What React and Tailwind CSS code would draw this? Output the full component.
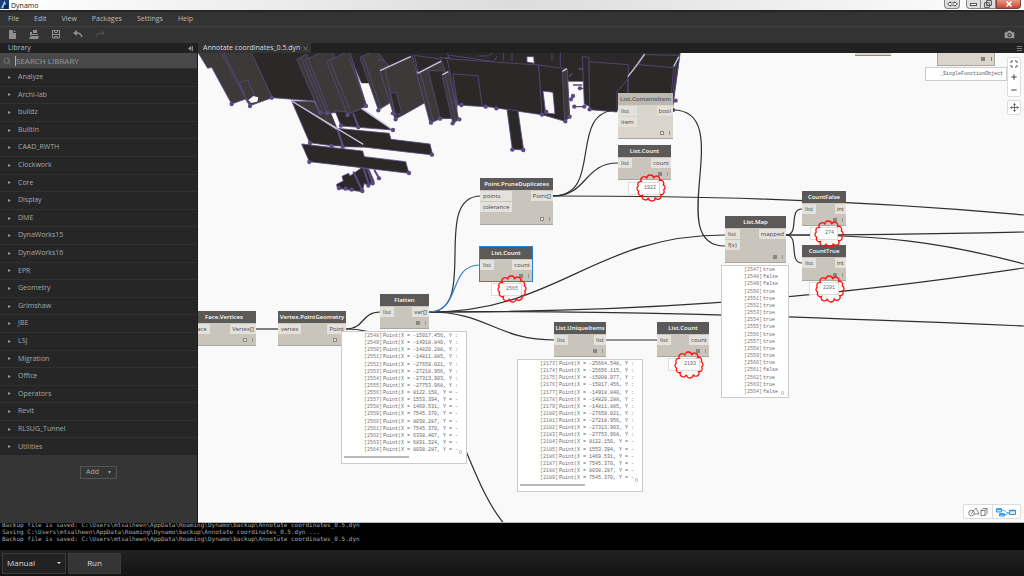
import { useState } from 'react';
import { Camera, Maximize, Menu, Minus, Move, Plus, Search, X } from 'lucide-react';

const MENUS = ['File', 'Edit', 'View', 'Packages', 'Settings', 'Help'];

const CATEGORIES = [
  'Analyze', 'Archi-lab', 'buildz', 'BuiltIn', 'CAAD_RWTH', 'Clockwork', 'Core', 'Display',
  'DME', 'DynaWorks15', 'DynaWorks16', 'EPR', 'Geometry', 'Grimshaw', 'JBE', 'LSJ',
  'Migration', 'Office', 'Operators', 'Revit', 'RLSUG_Tunnel', 'Utilities',
];

const LOG = [
  'Backup file is saved: C:\\Users\\mtsalheen\\AppData\\Roaming\\Dynamo\\backup\\Annotate coordinates_0.5.dyn',
  'Saving C:\\Users\\mtsalheen\\AppData\\Roaming\\Dynamo\\backup\\Annotate coordinates_0.5.dyn ...',
  'Backup file is saved: C:\\Users\\mtsalheen\\AppData\\Roaming\\Dynamo\\backup\\Annotate coordinates_0.5.dyn',
];

// x and y are canvas coordinates
const NODES = [
  { id: 'contains', title: 'List.ContainsItem', x: 420, y: 40, w: 55, h: 46, inputs: ['list', 'item'], output: 'bool', light: true },
  { id: 'count1', title: 'List.Count', x: 420, y: 92, w: 53, h: 35, inputs: ['list'], output: 'count', preview: true },
  { id: 'prune', title: 'Point.PruneDuplicates', x: 282, y: 125, w: 73, h: 47, inputs: ['points', 'tolerance'], output: 'Point[]' },
  { id: 'count2', title: 'List.Count', x: 281, y: 193, w: 54, h: 36, inputs: ['list'], output: 'count', preview: true, selected: true },
  { id: 'face', title: 'Face.Vertices', x: -6, y: 258, w: 64, h: 35, inputs: ['face'], output: 'Vertex[]' },
  { id: 'vertex', title: 'Vertex.PointGeometry', x: 80, y: 258, w: 68, h: 35, inputs: ['vertex'], output: 'Point' },
  { id: 'flatten', title: 'Flatten', x: 182, y: 241, w: 49, h: 35, inputs: ['list'], output: 'var[]', preview: true },
  { id: 'unique', title: 'List.UniqueItems', x: 356, y: 269, w: 52, h: 35, inputs: ['list'], output: 'list', preview: true },
  { id: 'count3', title: 'List.Count', x: 459, y: 269, w: 52, h: 35, inputs: ['list'], output: 'count', preview: true },
  { id: 'map', title: 'List.Map', x: 527, y: 163, w: 61, h: 47, inputs: ['list', 'f(x)'], output: 'mapped', preview: true },
  { id: 'false', title: 'CountFalse', x: 604, y: 138, w: 44, h: 35, inputs: ['list'], output: 'int', preview: true },
  { id: 'true', title: 'CountTrue', x: 604, y: 192, w: 44, h: 36, inputs: ['list'], output: 'int', preview: true },
];

const VALUES = [
  { value: '1922', x: 430, y: 129, w: 32, cx: 453, cy: 135 },
  { value: '2565', x: 293, y: 230, w: 31, cx: 314, cy: 236 },
  { value: '2193', x: 470, y: 305, w: 32, cx: 491, cy: 312 },
  { value: '274', x: 612, y: 174, w: 28, cx: 631, cy: 181 },
  { value: '2291', x: 611, y: 229, w: 30, cx: 632, cy: 236 },
];

const number = (start, rows) => rows.map((row, i) => ({ index: start + i, row }));

const FLATTEN_ROWS = number(2548, [
  '-15017.456, Y :', '-14918.840, Y :', '-14820.288, Y :', '-14811.885, Y :', '-27659.021, Y :',
  '-27218.956, Y :', '-27313.903, Y :', '-27753.968, Y :', '8122.150, Y = -', '1553.394, Y = -',
  '1469.531, Y = -', '7545.370, Y = -', '8038.287, Y = -', '7545.370, Y = -', '6338.407, Y = -',
  '6831.324, Y = -', '8038.287, Y = -',
].map((t) => `Point(X = ${t}`));

const UNIQUE_ROWS = number(2173, [
  '-25664.548, Y :', '-25656.115, Y :', '-15008.977, Y :', '-15017.456, Y :', '-14918.840, Y :',
  '-14820.288, Y :', '-14811.885, Y :', '-27659.021, Y :', '-27218.956, Y :', '-27313.903, Y :',
  '-27753.968, Y :', '8122.150, Y = -', '1553.394, Y = -', '1469.531, Y = -', '7545.370, Y = -',
  '8038.287, Y = -', '7545.370, Y = -',
].map((t) => `Point(X = ${t}`));

const MAP_ROWS = number(2547, [
  'true', 'false', 'false', 'true', 'true', 'true', 'true', 'true', 'true',
  'true', 'true', 'true', 'true', 'true', 'false', 'true', 'true', 'false',
]);

const WIRES = [
  'M57 276H80',
  'M148 276C167 276 163 259 182 259',
  'M148 276C215 276 245 340 268 398C282 432 292 454 307 472',
  'M231 259C282 259 232 143 283 143',
  'M231 259C360 259 395 182 527 182',
  'M231 259C290 259 298 287 357 287',
  'M231 259C420 259 590 250 826 215',
  'M231 259C400 257 560 262 826 273',
  'M355 143C407 143 368 57 420 57',
  'M355 143C390 143 385 110 420 110',
  'M355 143C480 143 640 145 826 162',
  'M475 57C540 57 464 193 527 193',
  'M408 287H459',
  'M588 182C602 182 590 156 604 156',
  'M588 182C602 182 590 210 604 210',
  'M588 182C650 182 730 181 826 179',
  'M588 182C680 182 740 188 826 211',
];

function TitleBar() {
  return (
    <header className="flex h-3 shrink-0 items-start border-b-2 border-[#252525] bg-linear-to-r from-white via-[#dcdcdc] to-white pr-[3px]">
      <svg viewBox="0 0 24 24" className="size-[9px]">
        <path d="M0 0h24v24H0z" fill="#173f7c" />
        <path d="M3 22 12 2l8 20h-6l-3-8-3 8z" fill="#b9d3ef" />
        <path d="M11 12h10v12H11z" fill="#0c2858" />
      </svg>
      <h1 className="pl-[2px] text-[7px] leading-[11px] text-[#222]">Dynamo</h1>
      <div className="ml-auto flex h-[9px] items-stretch">
        <button aria-label="Resize" className="mr-[6px] flex w-4 items-center justify-center rounded-b-sm border border-t-0 border-[#858585] bg-[#dfdfdf]">
          <svg viewBox="0 0 20 10" className="h-[6px] w-[11px]" fill="white" stroke="#444" strokeWidth="1.6">
            <path d="m1 5 5-4v2h8V1l5 4-5 4V7H6v2z" />
          </svg>
        </button>
        <button aria-label="Minimize" className="flex w-[15px] items-end justify-center rounded-bl-sm border border-t-0 border-[#858585] bg-[#dedede] pb-[2px]">
          <span className="h-[3px] w-[7px] border border-[#555] bg-white" />
        </button>
        <button aria-label="Restore" className="flex w-[15px] items-center justify-center border-r border-b border-[#858585] bg-[#dedede]">
          <svg viewBox="0 0 12 12" className="size-[8px]" fill="white" stroke="#444" strokeWidth="1.5">
            <path d="M4 1h7v7H4zM1 4h7v7H1z" />
            <path d="M4 7h1v1H4z" />
          </svg>
        </button>
        <button aria-label="Close" className="flex w-[25px] items-center justify-center rounded-br-sm border border-t-0 border-[#7b4037] bg-linear-to-b from-[#e39a88] to-[#c9442b]">
          <X className="size-[8px] text-white" strokeWidth={5} />
        </button>
      </div>
    </header>
  );
}

function Toolbar() {
  return (
    <div className="flex h-[17px] shrink-0 items-center border-t border-[#3f3f3f] bg-[#333] px-2 pb-[2px] text-[#8e8e8e]">
      <button aria-label="New" className="mr-3">
        <svg viewBox="0 0 9 10" className="h-[10px] w-[9px]" fill="currentColor">
          <path d="M1 1h4v3h3v6H1zM6 1l2 2H6z" />
        </svg>
      </button>
      <button aria-label="Open" className="mr-3">
        <svg viewBox="0 0 10 10" className="size-[10px]" fill="currentColor">
          <path d="M4 1h3l1-1v4H4zM1 3h2v2h6v1H2L1 8zM2 7h8l-1 3H0z" />
        </svg>
      </button>
      <button aria-label="Save" className="mr-3">
        <svg viewBox="0 0 10 10" className="size-[10px]" fill="none" stroke="currentColor">
          <path d="M1.500 1.500h7v7.500h-7zM1.500 5.500h7M3.500 1.500v2h3v-2M3.500 9V7.500h3V9" />
        </svg>
      </button>
      <button aria-label="Undo" className="mr-3">
        <svg viewBox="0 0 10 8" className="h-2 w-[10px]" fill="none" stroke="currentColor" strokeWidth="1.3">
          <path d="M1 3h3c3 0 4 1 5 4" />
          <path d="M4 0v6L0 3z" fill="currentColor" stroke="none" />
        </svg>
      </button>
      <button aria-label="Redo" className="text-[#505050]">
        <svg viewBox="0 0 10 8" className="h-2 w-[10px]" fill="none" stroke="currentColor" strokeWidth="1.2">
          <path d="M9 3H6C3 3 2 4 1 7M7 1l2 2-2 2" />
        </svg>
      </button>
      <button aria-label="Export image" className="ml-auto">
        <Camera className="size-[13px] text-[#333]" fill="#9a9a9a" strokeWidth={2} />
      </button>
    </div>
  );
}

function Library() {
  return (
    <aside className="flex w-[198px] shrink-0 flex-col border-r border-[#1c1c1c] bg-[#353535] text-[7px] text-[#a6a6a6]">
      <div className="flex h-[10px] items-center justify-between bg-[#212121] pr-1 pl-2">
        <h2 className="text-[7px] leading-[10px] text-[#bbb]">Library</h2>
        <button aria-label="Collapse library">
          <svg viewBox="0 0 6 6" className="size-[5px]" fill="#999">
            <path d="M4 0v6L0 3zM5 0h1v6H5z" />
          </svg>
        </button>
      </div>
      <label className="flex h-[15px] items-center bg-[#484848]">
        <Search className="mr-1 ml-[3px] size-2 shrink-0 text-[#8d8d8d]" />
        <input
          type="text"
          aria-label="Search library"
          placeholder="SEARCH LIBRARY"
          className="w-full border-l border-[#aaa] bg-transparent text-[8px] leading-[10px] outline-none placeholder:text-[#979797]"
        />
      </label>
      <ul className="flex h-[387px] shrink-0 flex-col">
        {CATEGORIES.map((name) => (
          <li key={name} className="flex flex-1 border-t border-[#313131] bg-[#262626]">
            <button className="flex w-full items-center pl-2">
              <svg viewBox="0 0 4 4" className="mr-[7px] size-[3px]" fill="#999">
                <path d="m0 0 4 2-4 2z" />
              </svg>
              {name}
            </button>
          </li>
        ))}
      </ul>
      <button className="mx-auto mt-[11px] flex h-[13px] w-[37px] items-center justify-between border border-[#555] px-[5px]">
        Add
        <svg viewBox="0 0 4 4" className="size-[3px]" fill="#999">
          <path d="M0 0h4L2 4z" />
        </svg>
      </button>
    </aside>
  );
}

function Model() {
  return (
    <g transform="translate(-3 -3) scale(.3333)" strokeWidth="2.4" stroke="#594a80" strokeLinejoin="round">
      {/* left hand walls */}
      <g fill="#3b3a38">
        <path d="M8 6 38 55 50 52 110 162 152 147 165 167 232 143 170 6z" />
        <path d="M85 6 165 167M78 6 158 160M133 98l25-8 27 62M133 98l16 36" fill="none" />
        <path d="m160 150 15-12 15 4-3 13-19 4z" fill="#f9f9f9" stroke="none" />
        <path d="M168 6 232 143 358 153 420 150 460 6z" fill="#2b2927" />
        <path d="M290 153 358 155 375 188 410 186 426 234z" />
        <path d="m290 153 54 125 66 9 95 4z" fill="#2b2927" />
        <path d="M405 182h18l16 44-13 5z" fill="#f9f9f9" stroke="none" />
        <path d="M305 28 335 12 396 190 375 188z" />
        <path d="M330 30 380 6 415 8 458 185 397 190z" />
        <path d="M318 24 386 188M340 28 402 184" fill="none" />
        <path d="M460 6h60l20 100-40-6z" fill="#2b2927" />
        <path d="M498 100h24l18 64-24 4z" fill="#f9f9f9" stroke="none" />
        <path d="m395 35 60-29h10l50 162-57 27z" />
        <path d="m406 34 60 150M462 22l52 142" fill="none" />
        <path d="m495 22 35-16h60v150l-40 24z" />
        <path d="m505 22 54 156M548 30h30v40" fill="none" />
        <path d="M548 6h230v30l-120 30-75-16z" fill="#2b2927" />
        <path d="m658 16 85 12v12l-75 30 22 88z" fill="#2b2927" />
        <path d="m555 62 97-45 38 141-65 37-25 13z" />
        <path d="m585 132 18-6 17 62-20 6z" fill="#2b2927" />
        <path d="m665 70 91-47h30v182l-50 1-31 14z" />
        <path d="m700 62 70 1 17 143-52-2z" fill="#2b2927" />
        <path d="m676 68 40 148M570 60l32 134" fill="none" />
      </g>
      <g fill="#2b2927">
        <path d="m420 182 18 46 52 4 103 8-95-64-28 12z" />
        <path d="M475 190 490 232" fill="none" strokeWidth="6" />
        <path d="m425 235 158 15 5 18 117 14 8 33-208-24-62-1z" />
        <path d="m428 238 16 52" fill="none" strokeWidth="6" />
        <path d="m320 282 183 21 5 17 124 15 10 35-142-17-157-18z" />
        <path d="m425 403 20-10-4-14 20-9 4 8 35-25 22 5 16 37-18 13-12-8-6 25-75-10z" />
        <path d="m475 365 27 58M505 353l18 54M518 358l16 42M538 360l14 24" fill="none" strokeWidth="6" />
      </g>
      <path d="m290 153 215 130M555 62l92-42M668 70l87-45M500 175l90 62" fill="none" stroke="#c8bedc" strokeWidth="4" />

      {/* right hand walls */}
      <g transform="translate(726 0)" fill="#2b2927">
        <path d="M30 6H730L706 180 458 178V95H395L385 60 40 30z" />
        <path d="M270 20h20l2 20-22-4z" fill="#f9f9f9" />
        <path d="M395 95h48l2 84-56 20z" fill="#f9f9f9" stroke="none" />
        <path d="M200 6v25M225 6v28M345 6v30M370 6v45M125 18h30l15-12M40 16l130 19 10-17" fill="none" />
        <path d="m10 22 30 5 265 18 14 150-160-24-98-6z" />
        <path d="m48 72 75 5 13 93M48 72l14 93M30 28l32 136" fill="none" />
        <path d="m15 75 20-10 30 143-17 14z" fill="#3b3a38" />
        <path d="M24 70 56 214M44 160l14-8" fill="none" />
        <path d="m305 45 85 12 8 145-14 12-69-20z" />
        <path d="m318 123 30 4 6 65-28-3z" fill="#f9f9f9" />
        <path d="m376 66 14-9 8 144-15 12z" fill="#3b3a38" />
        <path d="m436 20 20 2 3 148-17-8z" />
        <path d="m456 35 118 9v41l-34 41v60l-82-7z" />
        <path d="m573 80 32-36 20-30 103 2-22 160H573z" />
        <path d="m605 44 105 9M573 80v48M710 53l-10 120M718 40l-14 130" fill="none" />
        <path d="m210 178 33 4 17 118-34-2z" />
        <path d="m573 80 30-40 20-28M710 50l16-30M376 64l14-8M16 74l18-9" fill="none" stroke="#c8bedc" strokeWidth="4" />
        <path d="M398 150l12-14M412 170h34M408 105h28M425 57h14M426 115h14M396 80l10-10" fill="none" strokeWidth="4" />
      </g>

      <g fill="#5b4b85" stroke="none">
        {[
          [110, 162], [165, 168], [230, 143], [375, 188], [397, 190], [458, 195], [513, 168], [550, 181], [602, 208], [594, 190],
          [345, 279], [410, 288], [443, 291], [438, 227], [490, 232], [594, 240], [711, 314], [343, 336], [642, 369],
          [432, 414], [452, 416], [470, 419], [502, 423], [520, 407], [533, 400], [552, 385], [708, 218], [735, 206],
          [773, 220], [793, 208], [799, 165], [872, 170], [904, 175], [952, 299], [985, 300], [1041, 194], [1111, 214],
          [1124, 200], [1054, 186], [1128, 148], [1134, 138], [1138, 170], [1168, 170], [1155, 115], [1184, 178], [1442, 152], [1434, 180],
        ].map(([cx, cy]) => <circle key={`${cx}-${cy}`} cx={cx} cy={cy} r="6.500" />)}
      </g>
    </g>
  );
}

function Node({ node }) {
  const { title, x, y, w, h, inputs, output, light, preview, selected } = node;
  return (
    <section
      className={`absolute flex flex-col text-[6px] leading-[10px] text-[#444] ${light ? 'bg-[#d9d5cd]' : 'bg-[#cac5bc]'} ${selected ? 'border border-[#2f83cc]' : 'border-b border-[#aaa69e]'}`}
      style={{ left: x, top: y, width: w, height: h }}
    >
      <h3 className={`flex h-3 shrink-0 justify-center text-[6px] leading-3 font-semibold whitespace-nowrap ${light ? 'bg-[#bdb9b1] text-[#555]' : 'bg-[#5b5a58] text-white'}`}>
        {title}
      </h3>
      <div className="flex items-start justify-between pt-px">
        <div className="flex flex-col gap-px">
          {inputs.map((name) => <span key={name} className="bg-[#e4e1dc] px-[3px]">{name}</span>)}
        </div>
        <span className="bg-[#e4e1dc] px-[2px]">{output}</span>
      </div>
      <div className="mt-auto flex items-center justify-end gap-[5px] pr-[3px] pb-[3px]">
        <span className={`size-1 border ${preview ? 'border-[#8a8782] bg-[#8a8782]' : 'border-[#8c8983] bg-[#e4e1dc]'}`} />
        <span className="h-1 w-px bg-[#9a9791]" />
      </div>
    </section>
  );
}

function Watch({ rows, className, scroll }) {
  return (
    <div className={`absolute flex h-[133px] flex-col border border-[#ccc] bg-white font-['Liberation_Mono',monospace] text-[5px] leading-[7px] text-[#666] ${className}`}>
      <ol className="flex flex-1 flex-col justify-between overflow-hidden py-px">
        {rows.map(({ index, row }) => (
          <li key={index} className="flex gap-px whitespace-pre">
            <span className="text-[#777]">[{index}]</span>
            <span>{row}</span>
          </li>
        ))}
      </ol>
      {scroll && (
        <div className="flex h-2 shrink-0 items-start pt-px">
          <span className="-ml-5 h-[2px] w-[65px] bg-[#b9b9b9]" />
        </div>
      )}
      <span className={`absolute right-1 h-[4px] w-[3px] rounded-full border border-[#b5b5b5] ${scroll ? 'bottom-[9px]' : 'bottom-[2px]'}`} />
    </div>
  );
}

// closed outline made of outward arcs round an ellipse
function cloudPath(cx, cy) {
  const bumps = 12;
  const points = Array.from({ length: bumps }, (_, i) => {
    const a = (i / bumps) * Math.PI * 2 + 0.2;
    return `${(cx + Math.cos(a) * 13).toFixed(1)} ${(cy + Math.sin(a) * 10).toFixed(1)}`;
  });
  return `M${points[0]}` + [...points.slice(1), points[0]].map((p) => `A3 3 0 0 1 ${p}`).join('') + 'z';
}

function Canvas() {
  return (
    <main className="relative min-h-0 flex-1 overflow-hidden border-b border-[#bbb] bg-[#f9f9f9]">
      <svg className="absolute top-0 left-0 h-[470px] w-[826px]" viewBox="0 0 826 470">
        <Model />
        <g fill="none" stroke="#2f2f2f" strokeWidth="1.2">
          {WIRES.map((d) => <path key={d} d={d} />)}
          <path d="M231 259C264 259 249 212 282 212" stroke="#2f86d6" />
        </g>
      </svg>

      {NODES.map((node) => <Node key={node.id} node={node} />)}

      <div className="absolute top-0 left-[657px] h-[3px] w-9 border-b border-[#8b8781] bg-[#d9d5cd]" />
      <div className="absolute top-0 left-[739px] flex h-[13px] w-[58px] items-center justify-end gap-[6px] border border-t-0 border-[#aaa69e] bg-[#d9d5cd] pr-[2px]">
        <span className="size-1 bg-[#85827c]" />
        <span className="h-1 w-px bg-[#85827c]" />
      </div>
      <div className="absolute top-[14px] left-[727px] h-[14px] w-[82px] border border-[#ccc] bg-white pr-[3px] text-right font-['Liberation_Mono',monospace] text-[5px] leading-3 text-[#555]">
        _SingleFunctionObject
      </div>

      <Watch rows={FLATTEN_ROWS} scroll className="top-[278px] left-[143px] w-[126px] pl-[22px]" />
      <Watch rows={UNIQUE_ROWS} scroll className="top-[306px] left-[319px] w-[126px] pl-[22px]" />
      <Watch rows={MAP_ROWS} className="top-[212px] left-[523px] w-[68px] pl-[22px]" />

      {VALUES.map(({ value, x, y, w }) => (
        <output
          key={value}
          className="absolute h-[13px] border border-[#ddd] bg-white pr-[3px] text-right font-['Liberation_Mono',monospace] text-[5px] leading-[11px] text-[#666]"
          style={{ left: x, top: y, width: w }}
        >
          {value}
        </output>
      ))}
      <svg className="pointer-events-none absolute top-0 left-0 h-[470px] w-[826px]" viewBox="0 0 826 470" fill="none" stroke="#ff1010" strokeWidth="1.3">
        {VALUES.map(({ value, cx, cy }) => <path key={value} d={cloudPath(cx, cy)} />)}
      </svg>

      <div className="absolute top-1 right-[3px] flex w-[14px] flex-col gap-[3px] text-[#444]">
        <div className="flex h-10 flex-col items-center justify-around rounded-xs border border-[#ddd] bg-white">
          <button aria-label="Fit to screen"><Maximize className="size-2" strokeWidth={3} /></button>
          <button aria-label="Zoom in"><Plus className="size-2" strokeWidth={3} /></button>
          <button aria-label="Zoom out"><Minus className="size-2" strokeWidth={3} /></button>
        </div>
        <button aria-label="Pan" className="flex h-[15px] items-center justify-center rounded-xs border border-[#ddd] bg-white">
          <Move className="size-[9px]" strokeWidth={2} />
        </button>
      </div>

      <div className="absolute right-[3px] bottom-[3px] flex h-[15px] w-[58px] rounded-xs border border-[#ddd] bg-white">
        <button aria-label="Geometry view" className="flex flex-1 items-center justify-center border-r border-[#ddd]">
          <svg viewBox="0 0 20 10" className="h-[10px] w-5" fill="none" stroke="#666" strokeWidth=".8">
            <circle cx="3.5" cy="6" r="2.8" />
            <path d="m3 7 5-6 3 6H6M13 3.500h4v5h-4zM13 3.500 15 1.500h4v5l-2 2M17 3.500l2-2" />
          </svg>
        </button>
        <button aria-label="Graph view" className="flex flex-1 items-center justify-center">
          <svg viewBox="0 0 20 10" className="h-[10px] w-5" fill="#d5ecff" stroke="#2296f3" strokeWidth="1">
            <path d="M.5 2h5v3h-5zM3.500 7h5v2h-5zM13.500 3.500h6v4h-6z" />
            <path d="M.5 2h5M3.500 7h5M13.500 3.500h6" strokeWidth="1.6" />
            <path d="M6 3c4 0 3 3 7 3M8.500 8c2 0 3-2 5-2" fill="none" strokeWidth=".8" />
          </svg>
        </button>
      </div>
    </main>
  );
}

export default function App() {
  const [runMode, setRunMode] = useState('Manual');

  return (
    <div className="flex h-screen flex-col overflow-hidden bg-black font-['Open_Sans',sans-serif]">
      <TitleBar />
      <nav className="flex h-[14px] shrink-0 items-center gap-[15px] bg-[#333] pl-2 text-[7px] text-[#bbb]">
        {MENUS.map((name) => <button key={name}>{name}</button>)}
      </nav>
      <Toolbar />

      <div className="flex min-h-0 flex-1">
        <Library />
        <div className="flex min-w-0 flex-1 flex-col">
          <div className="flex h-[10px] shrink-0 items-center justify-between bg-[#212121] pr-px">
            <div className="flex h-full items-center gap-[2px] bg-[#333] pr-[2px] pl-[5px]">
              <span className="text-[7px] leading-[10px] font-medium text-[#ddd]">Annotate coordinates_0.5.dyn</span>
              <button aria-label="Close tab"><X className="size-[7px] text-[#999]" /></button>
            </div>
            <button aria-label="Tab list"><Menu className="size-[7px] text-[#888]" strokeWidth={3} /></button>
          </div>
          <Canvas />
        </div>
      </div>

      <div className="flex h-[27px] shrink-0 flex-col justify-end overflow-hidden bg-black pb-2 pl-[2px] font-['DejaVu_Sans_Mono',monospace] text-[6px] leading-[7px] whitespace-pre text-[#aaa]">
        {LOG.map((line, i) => <p key={i}>{line}</p>)}
      </div>

      <footer className="flex h-[26px] shrink-0 items-center gap-[2px] bg-linear-to-b from-[#222] to-[#141414] px-[2px] text-[8px] text-[#ddd]">
        <label className="relative flex h-[21px] w-16 items-center border border-[#3c3c3c] bg-[#222]">
          <select
            aria-label="Run mode"
            value={runMode}
            onChange={(e) => setRunMode(e.target.value)}
            className="h-full w-full appearance-none bg-transparent pl-1 outline-none"
          >
            <option>Manual</option>
            <option>Automatic</option>
          </select>
          <svg viewBox="0 0 4 2" className="pointer-events-none absolute right-1 h-[2px] w-1" fill="currentColor">
            <path d="M0 0h4L2 2z" />
          </svg>
        </label>
        <button className="h-[21px] w-[53px] border border-[#3c3c3c] bg-[#353535]">Run</button>
      </footer>
    </div>
  );
}
